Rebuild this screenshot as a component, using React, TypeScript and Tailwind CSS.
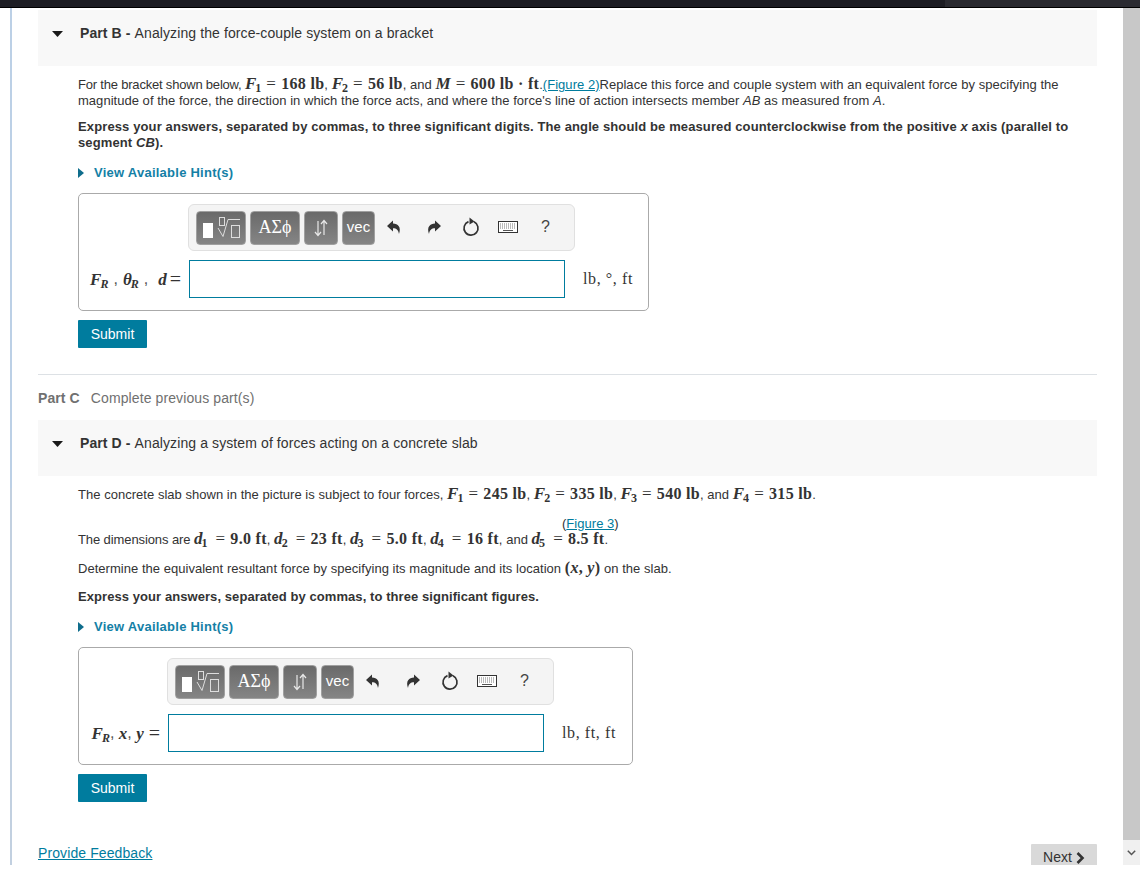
import React from "react";

const sans = "font-['Liberation_Sans',Arial,sans-serif]";
const serif = "font-['Liberation_Serif','Times_New_Roman',serif]";

const Sym = ({children, sub, italicSub}: {children: React.ReactNode; sub?: React.ReactNode; italicSub?: boolean}) => (
  <span className={`${serif} font-bold italic text-[17px] leading-none text-[#333]`}>
    {children}
    {sub && (
      <span className={`${italicSub ? "italic" : "not-italic"} text-[12px] relative top-[3px] -ml-[1px]`}>{sub}</span>
    )}
  </span>
);

// the d symbols sit wider than Liberation's in the reference
const SymD = ({sub}: {sub: string}) => (
  <span className="pr-[3px]">
    <Sym sub={sub}>d</Sym>
  </span>
);

const Val = ({children}: {children: React.ReactNode}) => (
  <span className={`${serif} font-bold text-[16px] leading-none tracking-[0.3px] text-[#333]`}>{children}</span>
);

// "= 168 lb" with the wide math spacing round the equals sign
const Eq = ({children}: {children: React.ReactNode}) => (
  <span className={`${serif} font-bold text-[16px] leading-none tracking-[0.3px] text-[#333]`}>
    <span className="mx-[5px] font-normal text-[17px]">=</span>
    {children}
  </span>
);

const Caret = () => (
  <svg width="11" height="6" viewBox="0 0 11 6" className="shrink-0 mt-[6px]">
    <path d="M0 0H11L5.5 6Z" fill="#1a1a1a" />
  </svg>
);

const PartHeader = ({part, title}: {part: string; title: string}) => (
  <div className="h-[56px] bg-[#f8f8f8] flex items-start pl-[14px] pt-[15px] gap-[17px] text-[14px] leading-[16px] tracking-[0.1px] text-[#333]">
    <Caret />
    <div>
      <span className="font-bold">{part} - </span>
      {title}
    </div>
  </div>
);

const Hint = () => (
  <div className="flex items-center gap-[10px] text-[13px] leading-[16px] tracking-[0.25px] font-bold text-[#1480a6]">
    <svg width="6" height="10" viewBox="0 0 6 10">
      <path d="M0 0L6 5L0 10Z" fill="#0f6d8c" />
    </svg>
    View Available Hint(s)
  </div>
);

const ToolButton = ({className, children}: {className: string; children: React.ReactNode}) => (
  <div
    className={`h-[34px] rounded-[4px] border border-[#a0a0a0] bg-gradient-to-b from-[#6a6a6a] to-[#858585] flex items-center justify-center text-white ${className}`}
  >
    {children}
  </div>
);

const Toolbar = () => (
  <div className="w-[387px] h-[47px] -ml-[1px] rounded-[6px] border border-[#e0e0e0] bg-[#f4f4f4] flex items-center pl-[7px]">
    <div className="flex gap-[4px]">
      <ToolButton className="w-[50px]">
        <svg width="48" height="32" viewBox="0 0 48 32">
          <rect x="6" y="11" width="10" height="15" fill="#fff" />
          <rect x="22.5" y="5.5" width="5" height="8" fill="none" stroke="#ddd" />
          <path d="M21 16L26 24.5L31 7.5H43" fill="none" stroke="#ddd" />
          <rect x="34.5" y="13.5" width="8" height="12" fill="none" stroke="#ddd" />
        </svg>
      </ToolButton>
      <ToolButton className={`w-[50px] ${serif} text-[18px]`}>ΑΣϕ</ToolButton>
      <ToolButton className="w-[34px]">
        <svg width="16" height="18" viewBox="0 0 16 18" fill="none" stroke="#e8e8e8" strokeWidth="1.2">
          <path d="M5 2V16M2 13L5 16.5L8 13" />
          <path d="M11 16V2M8 5L11 1.5L14 5" />
        </svg>
      </ToolButton>
      <ToolButton className="w-[33px] text-[15px]">vec</ToolButton>
    </div>
    <div className="flex items-center ml-[11px] -mt-[1px] text-[#333]">
      <svg width="16" height="16" viewBox="0 0 16 16">
        <path d="M1 7L7 1.5V4.5C12 4.5 15.5 8 13 15C12.5 11 10.5 9.2 7 9.2V12.5Z" fill="#333" />
      </svg>
      <svg width="16" height="16" viewBox="0 0 16 16" className="ml-[24px]">
        <path d="M15 7L9 1.5V4.5C4 4.5 0.5 8 3 15C3.5 11 5.5 9.2 9 9.2V12.5Z" fill="#333" />
      </svg>
      <svg width="18" height="20" viewBox="0 0 18 20" fill="none" className="ml-[20px]">
        <path d="M6.5 4.6A7 7 0 1 0 12 4.8" stroke="#333" strokeWidth="1.7" />
        <path d="M7.5 0.5L12.5 4.5L7.5 7.5Z" fill="#333" />
      </svg>
      <svg width="20" height="12" viewBox="0 0 20 12" className="ml-[18px]">
        <rect x="0.5" y="0.5" width="19" height="11" fill="#fff" stroke="#333" />
        <path d="M2 3H18M2 5H18M2 7H18" stroke="#777" strokeDasharray="1 1" />
        <path d="M5 9.5H15" stroke="#555" />
      </svg>
      <span className={`${sans} ml-[23px] text-[16px] leading-none text-[#444]`}>?</span>
    </div>
  </div>
);

const AnswerBox = ({
  width,
  labelWidth,
  label,
  units,
}: {
  width: string;
  labelWidth: string;
  label: React.ReactNode;
  units: string;
}) => (
  <div className={`${width} h-[118px] rounded-[5px] border border-[#aaa] pt-[10px]`}>
    <div className={`flex ${labelWidth}`}>
      <Toolbar />
    </div>
    <div className={`flex items-center mt-[9px] ${labelWidth}`}>
      <div className="w-[376px] h-[38px] border border-[#007c9e] relative">
        <div className="absolute right-full top-0 bottom-0 flex items-center pr-[9px] whitespace-nowrap">
          {label}
        </div>
      </div>
      <span className={`${serif} text-[16px] tracking-[0.6px] text-[#333] ml-[18px] whitespace-nowrap`}>{units}</span>
    </div>
  </div>
);

const SubmitButton = () => (
  <div className="w-[69px] h-[28px] rounded-[1px] bg-[#007c9e] text-white text-[14px] flex items-center justify-center">
    Submit
  </div>
);

export default function App() {
  return (
    <div className={`${sans} w-[1140px] h-[880px] overflow-hidden bg-white flex flex-col`}>
      <div className="h-[8px] shrink-0 bg-[#2b2b31] border-b border-black flex">
        <div className="w-[945px] bg-[#1e1e24]" />
      </div>
      <div className="h-[857px] flex shrink-0">
        <div className="w-[12px] shrink-0 pl-[10px] flex flex-col">
          <div className="w-[2px] h-[480px] bg-[#bcd0e6]" />
          <div className="w-[2px] flex-1 bg-[#c2d0e0]" />
        </div>
        <div className="w-[1111px] pl-[26px] pr-[26px] pt-[2px]">
          <PartHeader part="Part B" title="Analyzing the force-couple system on a bracket" />

          <div className="pl-[40px] pr-[28px] text-[13px] leading-[16px] tracking-[0.03px] text-[#333] mt-[9px]">
            <p>
              <span className="tracking-[-0.2px]">For the bracket shown below, </span>
              <Sym sub="1">F</Sym>
              <Eq>168 lb</Eq>, <Sym sub="2">F</Sym>
              <Eq>56 lb</Eq>, and <Sym>M</Sym>
              <Eq>600 lb · ft</Eq>.<span className="text-[#007c9e] underline">(Figure 2)</span>Replace this force and
              couple system with an equivalent force by specifying the magnitude of the force, the direction in which
              the force acts, and where the force's line of action intersects member <i>AB</i> as measured from <i>A</i>
              .
            </p>
            <p className="font-bold tracking-[0.12px] mt-[10px]">
              Express your answers, separated by commas, to three significant digits. The angle should be measured
              counterclockwise from the positive <i>x</i> axis (parallel to segment <i>CB</i>).
            </p>
            <div className="mt-[14px]">
              <Hint />
            </div>
          </div>

          <div className="pl-[40px] mt-[12px]">
            <AnswerBox
              width="w-[571px]"
              labelWidth="pl-[110px]"
              label={
                <>
                  <Sym sub="R" italicSub>
                    F
                  </Sym>
                  <span className="mx-[5px] text-[#555]">,</span>
                  <Sym sub="R" italicSub>
                    θ
                  </Sym>
                  <span className="mx-[5px] text-[#555]">,</span>
                  <span className="w-[5px]" />
                  <Sym>d</Sym>
                  <span className={`${serif} text-[20px] leading-none ml-[3px] text-[#333]`}>=</span>
                </>
              }
              units="lb, °, ft"
            />
            <div className="mt-[9px]">
              <SubmitButton />
            </div>
          </div>

          <div className="border-t border-[#dde1e5] mt-[26px] pt-[15px] h-[46px] text-[14px] leading-[16px] tracking-[0.1px] text-[#707070]">
            <span className="font-bold">Part C</span>
            <span className="ml-[11px]">Complete previous part(s)</span>
          </div>

          <PartHeader part="Part D" title="Analyzing a system of forces acting on a concrete slab" />

          <div className="pl-[40px] pr-[28px] text-[13px] leading-[16px] tracking-[0.03px] text-[#333] mt-[9px]">
            <p>
              The concrete slab shown in the picture is subject to four forces, <Sym sub="1">F</Sym>
              <Eq>245 lb</Eq>, <Sym sub="2">F</Sym>
              <Eq>335 lb</Eq>, <Sym sub="3">F</Sym>
              <Eq>540 lb</Eq>, and <Sym sub="4">F</Sym>
              <Eq>315 lb</Eq>.
            </p>
            <div className="pl-[484px] mt-[13px]">
              (<span className="text-[#007c9e] underline">Figure 3</span>)
            </div>
            <p className="-mt-[2px]">
              <span className="tracking-[-0.1px]">The dimensions are </span>
              <SymD sub="1" />
              <Eq>9.0 ft</Eq>, <SymD sub="2" />
              <Eq>23 ft</Eq>, <SymD sub="3" />
              <Eq>5.0 ft</Eq>, <SymD sub="4" />
              <Eq>16 ft</Eq>, and <SymD sub="5" />
              <Eq>8.5 ft</Eq>.
            </p>
            <p className="mt-[12px]">
              Determine the equivalent resultant force by specifying its magnitude and its location{" "}
              <Val>
                (<i>x</i>, <i>y</i>)
              </Val>{" "}
              on the slab.
            </p>
            <p className="font-bold tracking-[0.07px] mt-[12px]">
              Express your answers, separated by commas, to three significant figures.
            </p>
            <div className="mt-[14px]">
              <Hint />
            </div>
          </div>

          <div className="pl-[40px] mt-[12px]">
            <AnswerBox
              width="w-[555px]"
              labelWidth="pl-[89px]"
              label={
                <>
                  <Sym sub="R" italicSub>
                    F
                  </Sym>
                  <span className="text-[#555]">,&nbsp;</span>
                  <Sym>x</Sym>
                  <span className="text-[#555]">,&nbsp;</span>
                  <Sym>y</Sym>
                  <span className={`${serif} text-[20px] leading-none ml-[5px] text-[#333]`}>=</span>
                </>
              }
              units="lb, ft, ft"
            />
            <div className="mt-[9px]">
              <SubmitButton />
            </div>
          </div>

          <div className="flex items-end justify-between mt-[42px]">
            <span className="text-[14px] leading-[16px] tracking-[0.1px] text-[#007c9e] underline mb-[4px]">
              Provide Feedback
            </span>
            <div className="w-[66px] h-[21px] bg-[#d9d9d9] rounded-t-[1px] flex items-center justify-center gap-[4px] text-[14px] text-[#333] pt-[6px] overflow-hidden">
              Next
              <svg width="9" height="12" viewBox="0 0 9 12">
                <path d="M1.5 1L6.5 6L1.5 11" fill="none" stroke="#333" strokeWidth="2.6" />
              </svg>
            </div>
          </div>
        </div>
        <div className="w-[17px] shrink-0 flex flex-col">
          <div className="flex-1 bg-[#c8c8c8]" />
          <div className="h-[25px] bg-[#f0f0f0] flex items-center justify-center">
            <svg width="9" height="6" viewBox="0 0 9 6">
              <path d="M0.8 0.8L4.5 4.5L8.2 0.8" fill="none" stroke="#555" strokeWidth="1.5" />
            </svg>
          </div>
        </div>
      </div>
    </div>
  );
}
